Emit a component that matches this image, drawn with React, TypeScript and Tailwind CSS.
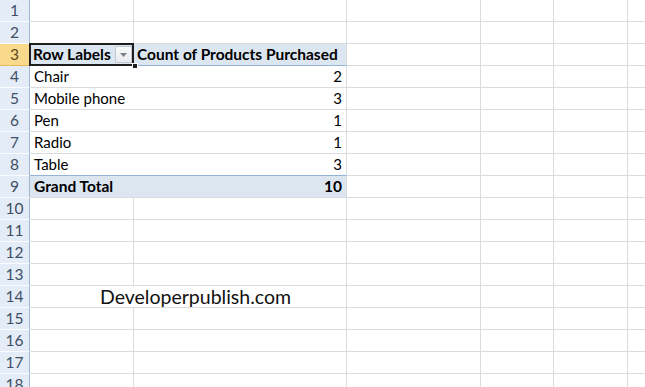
import React from "react";

const font = { fontFamily: "Lato, 'Open Sans', sans-serif" };

const rows = [
  { label: "Chair", n: 2 },
  { label: "Mobile phone", n: 3 },
  { label: "Pen", n: 1 },
  { label: "Radio", n: 1 },
  { label: "Table", n: 3 },
];

function RowHead({ n, active }: { n: number; active?: boolean }) {
  return (
    <div
      className={
        "h-[22px] flex items-center justify-center border-r border-r-[#9eb6ce] border-b text-[15.5px] " +
        (active
          ? "bg-[#f9d98c] border-b-[#e9b65a] text-[#5b4a23]"
          : "bg-[#e4ecf7] border-b-[#fafcff] text-[#3e4f66]")
      }
    >
      {n}
    </div>
  );
}

function Blank({ last }: { last?: boolean }) {
  return <div className={"h-[22px] border-b border-[#dadcdd] " + (last ? "" : "border-r")} />;
}

function RestCells() {
  return (
    <>
      <Blank />
      <Blank />
      <Blank />
      <Blank last />
    </>
  );
}

export default function App() {
  return (
    <div className="w-[645px] h-[387px] overflow-hidden bg-white text-[15px] text-black" style={font}>
      <div className="grid grid-cols-[30px_104px_213px_134px_73px_74px_1fr]">
        {/* 1-2 */}
        {[1, 2].map((r) => (
          <React.Fragment key={r}>
            <RowHead n={r} />
            <Blank />
            <Blank />
            <RestCells />
          </React.Fragment>
        ))}

        {/* 3: pivot header */}
        <RowHead n={3} active />
        <div className="relative h-[22px] bg-[#dce6f1] border-b border-b-[#95b3d7]">
          <div className="absolute -left-px -top-[1px] w-[105px] h-[23px] border-2 border-[#1e1e1e] z-10" />
          <div className="absolute right-[-4px] bottom-[-4px] w-[6px] h-[6px] bg-[#1e1e1e] border border-white z-20" />
          <div className="h-full flex items-center pl-[3px] font-bold text-[15.5px]">Row Labels</div>
          <div className="absolute right-[2px] top-[2px] w-[17px] h-[17px] border border-[#c5c9cf] bg-gradient-to-b from-[#fbfbfc] to-[#e6e9ee] flex items-center justify-center">
            <svg width="7" height="4" viewBox="0 0 7 4">
              <path d="M0 0h7L3.5 4z" fill="#7b8088" />
            </svg>
          </div>
        </div>
        <div className="h-[22px] bg-[#dce6f1] border-b border-b-[#95b3d7] border-r border-r-[#dadcdd] flex items-center pl-[3px] font-bold text-[15.5px]">
          Count of Products Purchased
        </div>
        <RestCells />

        {/* 4-8: data */}
        {rows.map((d, i) => (
          <React.Fragment key={d.label}>
            <RowHead n={i + 4} />
            <div
              className={
                "h-[22px] flex items-center pl-[4px] border-b " +
                (i === rows.length - 1 ? "border-[#95b3d7]" : "border-[#dadcdd]")
              }
            >
              {d.label}
            </div>
            <div
              className={
                "h-[22px] flex items-center justify-end pr-[4px] border-r border-r-[#dadcdd] border-b " +
                (i === rows.length - 1 ? "border-b-[#95b3d7]" : "border-b-[#dadcdd]")
              }
            >
              {d.n}
            </div>
            <RestCells />
          </React.Fragment>
        ))}

        {/* 9: grand total */}
        <RowHead n={9} />
        <div className="h-[22px] bg-[#dce6f1] border-b border-[#dadcdd] flex items-center pl-[4px] font-bold text-[15.5px]">
          Grand Total
        </div>
        <div className="h-[22px] bg-[#dce6f1] border-b border-r border-[#dadcdd] flex items-center justify-end pr-[4px] font-bold text-[15.5px]">
          10
        </div>
        <RestCells />

        {/* 10-18 */}
        {[10, 11, 12, 13, 14, 15, 16, 17, 18].map((r) =>
          r === 14 ? (
            <React.Fragment key={r}>
              <RowHead n={r} />
              <div className="col-span-2 h-[22px] border-b border-r border-[#dadcdd] flex items-center pl-[70px] text-[19.5px] text-[#111]">
                Developerpublish.com
              </div>
              <RestCells />
            </React.Fragment>
          ) : (
            <React.Fragment key={r}>
              <RowHead n={r} />
              <Blank />
              <Blank />
              <RestCells />
            </React.Fragment>
          )
        )}
      </div>
    </div>
  );
}
